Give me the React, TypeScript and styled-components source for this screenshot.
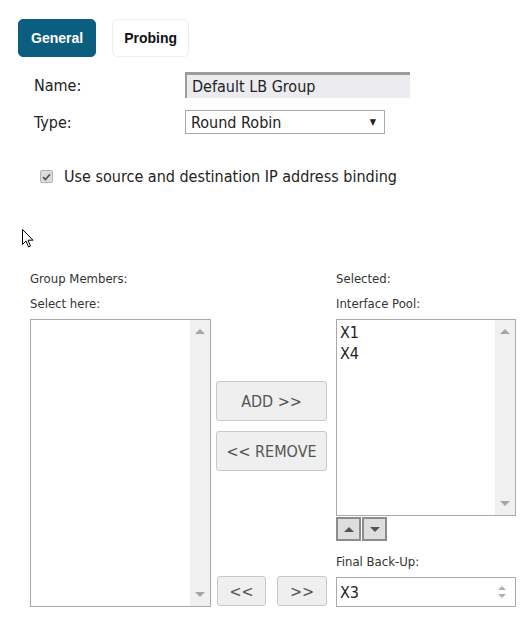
import React from "react";
import styled, { createGlobalStyle } from "styled-components";

const Global = createGlobalStyle`
  html, body { margin: 0; padding: 0; background: #fff; }
  body { font-family: "DejaVu Sans Condensed", "Liberation Sans", Arial, sans-serif; color: #222; }
  * { box-sizing: border-box; }
`;

const Page = styled.div`
  width: 532px;
  height: 619px;
  padding: 19px 0 0 18px;
  position: relative;
  overflow: hidden;
`;

const TabBar = styled.div`
  display: flex;
  gap: 16px;
`;

const Tab = styled.div<{ $active?: boolean }>`
  height: 38px;
  padding: 0 ${(p) => (p.$active ? 12 : 11)}px;
  min-width: ${(p) => (p.$active ? 77 : 76)}px;
  display: flex;
  align-items: center;
  justify-content: center;
  border-radius: 5px;
  font-family: "Liberation Sans", Arial, sans-serif;
  font-weight: bold;
  font-size: 14px;
  background: ${(p) => (p.$active ? "#0c5e80" : "#fff")};
  color: ${(p) => (p.$active ? "#fff" : "#111")};
  border: 1px solid ${(p) => (p.$active ? "#0c5e80" : "#efefef")};
`;

const FormGrid = styled.div`
  display: grid;
  grid-template-columns: 151px auto;
  row-gap: 12px;
  margin: 15px 0 0 16px;
  align-items: center;
`;

const Label = styled.div`
  font-size: 16px;
  color: #222;
`;

const NameInput = styled.div`
  width: 225px;
  height: 26px;
  background: #ececf0;
  border-top: 3px solid #9c9c9c;
  border-left: 2px solid #9c9c9c;
  font-size: 16px;
  color: #222;
  padding-left: 5px;
  display: flex;
  align-items: center;
`;

const Select = styled.div`
  width: 200px;
  height: 24px;
  border: 1px solid #a9a9a9;
  background: #fff;
  font-size: 16px;
  color: #222;
  padding: 0 8px 0 5px;
  display: flex;
  align-items: center;
  justify-content: space-between;
`;

const Arrow = styled.span`
  font-size: 9px;
  color: #222;
`;

const CheckRow = styled.div`
  display: flex;
  align-items: center;
  gap: 11px;
  margin: 33px 0 0 22px;
  font-size: 16px;
  color: #222;
`;

const CheckBox = styled.span`
  width: 13px;
  height: 13px;
  border-radius: 2px;
  background: #dcdcdc;
  border: 1px solid #b4b4b4;
  display: inline-flex;
  align-items: center;
  justify-content: center;
`;

const Cursor = styled.svg`
  position: absolute;
  left: 22px;
  top: 229px;
`;

const Members = styled.div`
  display: grid;
  grid-template-columns: 181px 116px 189px;
  margin: 84px 0 0 12px;
`;

const Col = styled.div<{ $ml?: number }>`
  display: flex;
  flex-direction: column;
  margin-left: ${(p) => p.$ml ?? 0}px;
`;

const SmallLabel = styled.div<{ $mt?: number }>`
  font-size: 13px;
  color: #333;
  height: 17px;
  line-height: 17px;
  margin-top: ${(p) => p.$mt ?? 0}px;
`;

const ListBox = styled.div<{ $h: number }>`
  height: ${(p) => p.$h}px;
  border: 1px solid #a9a9a9;
  background: #fff;
  display: flex;
  margin-top: 7px;
`;

const ListItems = styled.div`
  flex: 1;
  padding: 2px 0 0 3px;
  font-size: 16px;
  line-height: 21px;
  color: #222;
`;

const ScrollTrack = styled.div`
  width: 20px;
  background: #f0f0f0;
  display: flex;
  flex-direction: column;
  justify-content: space-between;
  align-items: center;
  padding: 9px 0 9px;
`;

const Tri = ({ up, color = "#a6a6a6", w = 10 }: { up?: boolean; color?: string; w?: number }) => (
  <svg width={w} height={Math.round(w / 2)} viewBox="0 0 10 5">
    <polygon points={up ? "0,5 10,5 5,0" : "0,0 10,0 5,5"} fill={color} />
  </svg>
);

const Middle = styled.div`
  display: flex;
  flex-direction: column;
  margin-left: 5px;
  padding-top: 63px;
  height: 288px;
  margin-top: 48px;
`;

const Btn = styled.div<{ $w?: number; $h?: number }>`
  width: ${(p) => p.$w ?? 111}px;
  height: ${(p) => p.$h ?? 40}px;
  background: #efefef;
  border: 1px solid #c8c8c8;
  border-radius: 3px;
  color: #555;
  font-size: 16px;
  display: flex;
  align-items: center;
  justify-content: center;
`;

const BtnStack = styled.div`
  display: flex;
  flex-direction: column;
  gap: 10px;
`;

const BottomBtns = styled.div`
  margin-top: auto;
  display: flex;
  justify-content: space-between;
  padding-left: 1px;
`;

const OrderBtns = styled.div`
  display: flex;
  gap: 1px;
  margin-top: 1px;
`;

const OrderBtn = styled.div`
  width: 25px;
  height: 24px;
  background: #dedede;
  border: 2px solid #8c8c8c;
  display: flex;
  align-items: center;
  justify-content: center;
`;

const BackupBox = styled.div`
  height: 30px;
  border: 1px solid #a9a9a9;
  display: flex;
  align-items: center;
  justify-content: space-between;
  padding: 0 9px 0 3px;
  margin-top: 7px;
  font-size: 16px;
  color: #222;
`;

const Spinner = styled.div`
  display: flex;
  flex-direction: column;
  gap: 4px;
`;

export default function App() {
  return (
    <>
      <Global />
      <Page>
        <TabBar>
          <Tab $active>General</Tab>
          <Tab>Probing</Tab>
        </TabBar>
        <FormGrid>
          <Label>Name:</Label>
          <NameInput>Default LB Group</NameInput>
          <Label>Type:</Label>
          <Select>
            <span>Round Robin</span>
            <Arrow>▼</Arrow>
          </Select>
        </FormGrid>
        <CheckRow>
          <CheckBox>
            <svg width="9" height="8" viewBox="0 0 9 8">
              <path d="M1 4.2 L3.4 6.5 L8 1.3" stroke="#555" strokeWidth="1.8" fill="none" />
            </svg>
          </CheckBox>
          <span>Use source and destination IP address binding</span>
        </CheckRow>
        <Cursor width="12" height="19" viewBox="0 0 12 19">
          <path d="M0.5 0.5 L0.5 15.5 L4 12 L6.5 18 L8.5 17 L6 11.2 L11 11.2 Z" fill="#fff" stroke="#000" strokeWidth="1" strokeLinejoin="round" />
        </Cursor>
        <Members>
          <Col>
            <SmallLabel>Group Members:</SmallLabel>
            <SmallLabel $mt={8}>Select here:</SmallLabel>
            <ListBox $h={288}>
              <ListItems />
              <ScrollTrack>
                <Tri up />
                <Tri />
              </ScrollTrack>
            </ListBox>
          </Col>
          <Middle>
            <BtnStack>
              <Btn>ADD &gt;&gt;</Btn>
              <Btn>&lt;&lt; REMOVE</Btn>
            </BtnStack>
            <BottomBtns>
              <Btn $w={49} $h={30}>&lt;&lt;</Btn>
              <Btn $w={50} $h={30}>&gt;&gt;</Btn>
            </BottomBtns>
          </Middle>
          <Col $ml={9}>
            <SmallLabel>Selected:</SmallLabel>
            <SmallLabel $mt={8}>Interface Pool:</SmallLabel>
            <ListBox $h={197}>
              <ListItems>
                <div>X1</div>
                <div>X4</div>
              </ListItems>
              <ScrollTrack>
                <Tri up />
                <Tri />
              </ScrollTrack>
            </ListBox>
            <OrderBtns>
              <OrderBtn>
                <Tri up color="#555" w={10} />
              </OrderBtn>
              <OrderBtn>
                <Tri color="#555" w={10} />
              </OrderBtn>
            </OrderBtns>
            <SmallLabel $mt={12}>Final Back-Up:</SmallLabel>
            <BackupBox>
              <span>X3</span>
              <Spinner>
                <Tri up color="#b0b0b0" w={8} />
                <Tri color="#b0b0b0" w={8} />
              </Spinner>
            </BackupBox>
          </Col>
        </Members>
      </Page>
    </>
  );
}
